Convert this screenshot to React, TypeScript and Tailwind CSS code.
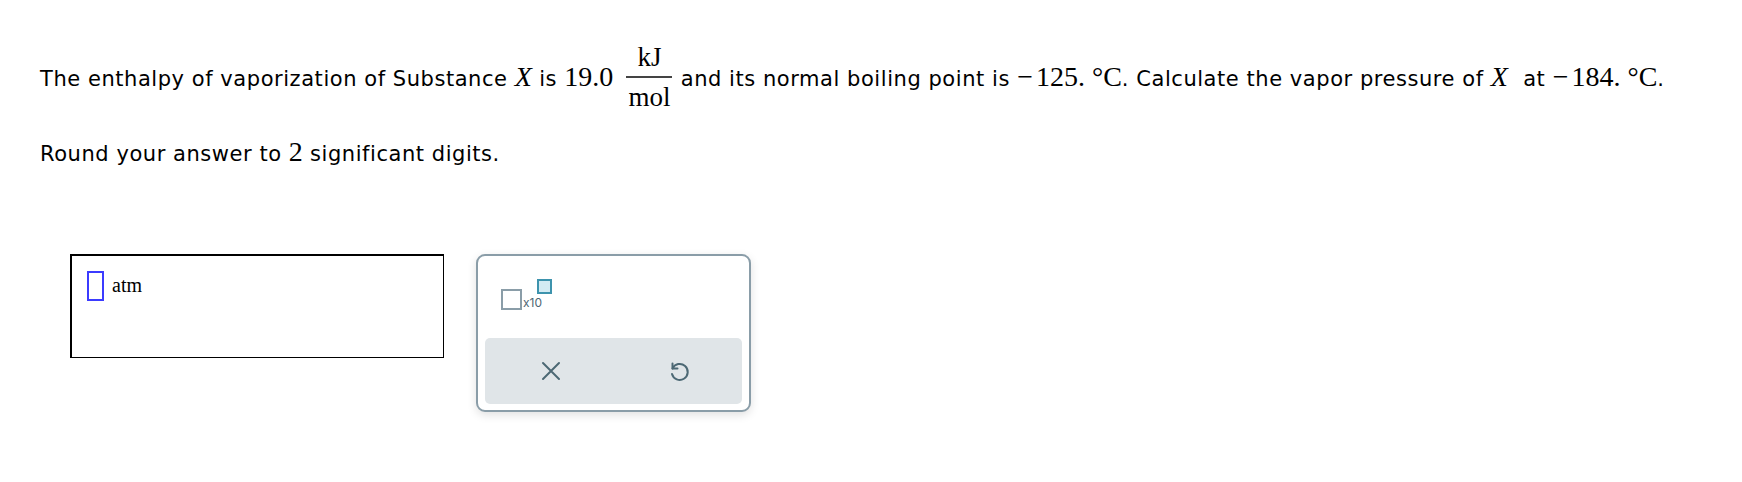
import React from "react";

const serif = "font-['Liberation_Serif',serif]";

export default function App() {
  return (
    <div className="w-[1742px] h-[482px] bg-white text-black font-['DejaVu_Sans',sans-serif] text-[21px] tracking-[0.55px] overflow-hidden">
      <div className="pl-[40px] pt-[44px]">
        <p className="leading-[24px] whitespace-nowrap">
          The enthalpy of vaporization of Substance{" "}
          <span className={`${serif} italic text-[28px] tracking-normal`}>X</span> is{" "}
          <span className={`${serif} text-[28px] tracking-normal`}>19.0</span>{" "}
          <span className={`${serif} inline-flex flex-col items-center align-[20px] text-[27px] leading-[26px] ml-[6px] mr-[1px] tracking-normal`}>
            <span className="px-[1px]">kJ</span>
            <span className="block w-[46px] h-[2px] bg-[#444] my-[6px]"></span>
            <span>mol</span>
          </span>{" "}
          and its normal boiling point is{" "}
          <span className={`${serif} text-[28px] tracking-normal`}>
            <span className="mr-[3px]">−</span>125. °C
          </span>
          . Calculate the vapor pressure of{" "}
          <span className={`${serif} italic text-[28px] tracking-normal mr-[8px]`}>X</span> at{" "}
          <span className={`${serif} text-[28px] tracking-normal`}>
            <span className="mr-[3px]">−</span>184. °C
          </span>
          .
        </p>
        <p className="mt-[30px] leading-[24px]">
          Round your answer to <span className={`${serif} text-[28px] tracking-normal`}>2</span> significant digits.
        </p>
      </div>

      <div className="flex items-start gap-[32px] pl-[70px] mt-[88px]">
        <div className="w-[374px] h-[104px] border border-black border-t-2 border-l-2 pl-[15px] pt-[14px] flex items-start gap-[8px]">
          <div className="w-[17px] h-[30px] border-2 border-[#3b3bff] mt-[1px]"></div>
          <span className={`${serif} text-[20px] leading-[30px] tracking-normal`}>atm</span>
        </div>

        <div className="w-[275px] h-[158px] border-2 border-[#8a9da8] rounded-[9px] bg-white shadow-[0_3px_10px_rgba(0,0,0,0.12)] flex flex-col px-[7px] pb-[6px]">
          <div className="h-[82px] flex items-start pl-[16px] pt-[23px]">
            <div className="relative flex items-end">
              <div className="w-[21px] h-[21px] border-2 border-[#8a9da8] mt-[10px]"></div>
              <span className="font-['Inter',sans-serif] text-[12px] leading-[12px] text-[#4d6673] ml-[1px] mb-[1px] tracking-normal">x10</span>
              <div className="absolute left-[36px] top-0 w-[15px] h-[15px] border-2 border-[#3d93ad] bg-[#d3ebf3]"></div>
            </div>
          </div>
          <div className="flex-1 bg-[#e0e5e8] rounded-[5px] flex items-center justify-around">
            <svg width="22" height="22" viewBox="0 0 22 22" className="ml-[4px]">
              <path d="M3 3 L19 19 M19 3 L3 19" stroke="#4c6874" strokeWidth="2" strokeLinecap="round" fill="none" />
            </svg>
            <svg width="24" height="24" viewBox="0 0 24 24" className="ml-[2px]">
              <path d="M5.5 9.5 A8 8 0 1 1 5 15" stroke="#4c6874" strokeWidth="2" strokeLinecap="round" fill="none" />
              <path d="M5.5 4.5 L5.5 9.5 L10.5 9.5" stroke="#4c6874" strokeWidth="2" strokeLinecap="round" strokeLinejoin="round" fill="none" />
            </svg>
          </div>
        </div>
      </div>
    </div>
  );
}
